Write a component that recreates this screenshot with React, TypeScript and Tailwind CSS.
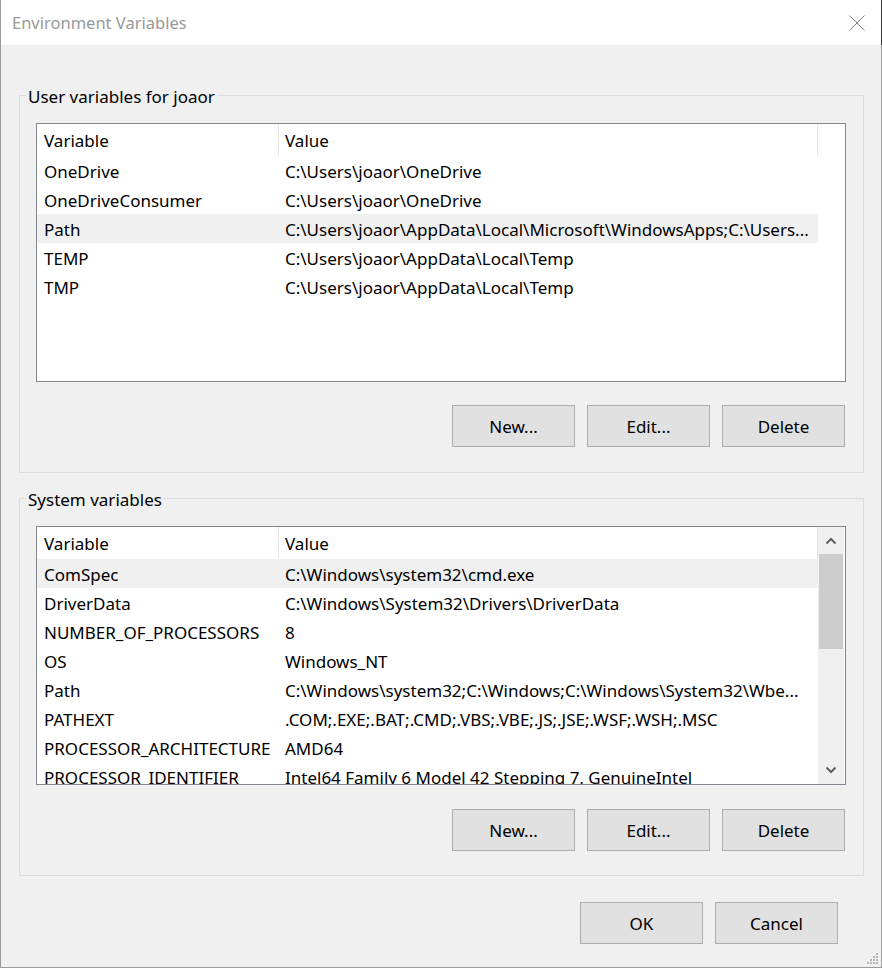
import React from 'react';

type Row = { name: string; value: string };

const userRows: Row[] = [
  { name: 'OneDrive', value: 'C:\\Users\\joaor\\OneDrive' },
  { name: 'OneDriveConsumer', value: 'C:\\Users\\joaor\\OneDrive' },
  { name: 'Path', value: 'C:\\Users\\joaor\\AppData\\Local\\Microsoft\\WindowsApps;C:\\Users...' },
  { name: 'TEMP', value: 'C:\\Users\\joaor\\AppData\\Local\\Temp' },
  { name: 'TMP', value: 'C:\\Users\\joaor\\AppData\\Local\\Temp' },
];

const systemRows: Row[] = [
  { name: 'ComSpec', value: 'C:\\Windows\\system32\\cmd.exe' },
  { name: 'DriverData', value: 'C:\\Windows\\System32\\Drivers\\DriverData' },
  { name: 'NUMBER_OF_PROCESSORS', value: '8' },
  { name: 'OS', value: 'Windows_NT' },
  { name: 'Path', value: 'C:\\Windows\\system32;C:\\Windows;C:\\Windows\\System32\\Wbe...' },
  { name: 'PATHEXT', value: '.COM;.EXE;.BAT;.CMD;.VBS;.VBE;.JS;.JSE;.WSF;.WSH;.MSC' },
  { name: 'PROCESSOR_ARCHITECTURE', value: 'AMD64' },
  { name: 'PROCESSOR_IDENTIFIER', value: 'Intel64 Family 6 Model 42 Stepping 7, GenuineIntel' },
];

const Button: React.FC<{ label: string }> = ({ label }) => (
  <button className="w-[123px] h-[42px] bg-[#e1e1e1] border border-[#adadad] text-[17px] text-black leading-none">
    {label}
  </button>
);

const Chevron: React.FC<{ up?: boolean }> = ({ up }) => (
  <svg width="12" height="8" viewBox="0 0 12 8" className="block">
    <path
      d={up ? 'M1.5 6.5 L6 2 L10.5 6.5' : 'M1.5 1.5 L6 6 L10.5 1.5'}
      fill="none"
      stroke="#606060"
      strokeWidth="2"
    />
  </svg>
);

// list view with header; the last row is cut by the box edge, as in the dialog
const ListBox: React.FC<{ rows: Row[]; selected: number; scroll?: boolean }> = ({ rows, selected, scroll }) => (
  <div className="w-[810px] h-[259px] border border-[#828790] bg-white flex overflow-hidden">
    <div className="w-[781px] shrink-0 flex flex-col">
      <div className="h-[32px] shrink-0 flex items-stretch">
        <div className="w-[241px] pl-[7px] pt-[2px] flex items-center">Variable</div>
        <div className="w-px bg-[#e5e5e5]" />
        <div className="w-[538px] pl-[6px] pt-[2px] flex items-center">Value</div>
        <div className="w-px bg-[#e5e5e5]" />
      </div>
      {rows.map((r, i) => (
        <div
          key={r.name + i}
          className={`h-[29px] shrink-0 pt-[2px] flex items-center whitespace-nowrap ${i === selected ? 'bg-[#f0f0f0]' : ''}`}
        >
          <div className="w-[242px] pl-[7px] overflow-hidden">{r.name}</div>
          <div className="w-[538px] pl-[6px] overflow-hidden">{r.value}</div>
        </div>
      ))}
    </div>
    {scroll && (
      <div className="w-[26px] bg-[#f0f0f0] flex flex-col items-center">
        <div className="h-[27px] w-full flex items-center justify-center">
          <Chevron up />
        </div>
        <div className="w-[24px] h-[95px] bg-[#cdcdcd]" />
        <div className="flex-1" />
        <div className="h-[28px] w-full flex items-center justify-center">
          <Chevron />
        </div>
      </div>
    )}
  </div>
);

const Group: React.FC<{
  title: string;
  rows: Row[];
  selected: number;
  scroll?: boolean;
  gap: string;
  className?: string;
}> = ({ title, rows, selected, scroll, gap, className = '' }) => (
  <fieldset className={`w-[845px] ml-[18px] border border-[#dcdcdc] pl-[16px] pr-[17px] ${className}`}>
    <legend className="-ml-[10px] px-[2px] pt-[4px] leading-[26px]">{title}</legend>
    <div className="pt-[13px]">
      <ListBox rows={rows} selected={selected} scroll={scroll} />
      <div className={`flex justify-end gap-[12px] mr-px ${gap}`}>
        <Button label="New..." />
        <Button label="Edit..." />
        <Button label="Delete" />
      </div>
    </div>
  </fieldset>
);

export default function App() {
  return (
    <div className="w-[882px] h-[968px] flex flex-col border-l border-b border-[#9a9a9a] font-['Noto_Sans',sans-serif] text-[17px] text-black">
      {/* Title bar */}
      <div className="h-[45px] shrink-0 bg-white border-r border-[#333333] flex items-center justify-between pl-[11px] pr-[16px]">
        <span className="text-[#999999] text-[16.5px] pt-[2px]">Environment Variables</span>
        <svg width="16" height="16" viewBox="0 0 16 16">
          <path d="M0.5 0.5 L15.5 15.5 M15.5 0.5 L0.5 15.5" stroke="#808080" strokeWidth="1" />
        </svg>
      </div>

      {/* Body */}
      <div className="flex-1 bg-[#f0f0f0] border-r border-[#a0a0a0] flex flex-col relative">
        <Group
          title="User variables for joaor"
          rows={userRows}
          selected={2}
          gap="mt-[23px]"
          className="mt-[35px] pb-[25px]"
        />
        <Group
          title="System variables"
          rows={systemRows}
          selected={0}
          scroll
          gap="mt-[24px]"
          className="mt-[10px] pb-[24px]"
        />

        <div className="flex justify-end gap-[12px] mr-[43px] mt-[26px]">
          <Button label="OK" />
          <Button label="Cancel" />
        </div>

        {/* Resize grip */}
        <svg width="12" height="12" viewBox="0 0 12 12" className="absolute right-[2px] bottom-[2px]">
          {[
            [9, 0],
            [6, 3],
            [9, 3],
            [3, 6],
            [6, 6],
            [9, 6],
            [0, 9],
            [3, 9],
            [6, 9],
            [9, 9],
          ].map(([x, y], i) => (
            <rect key={i} x={x} y={y} width="2" height="2" fill="#b5b5b5" />
          ))}
        </svg>
      </div>
    </div>
  );
}
